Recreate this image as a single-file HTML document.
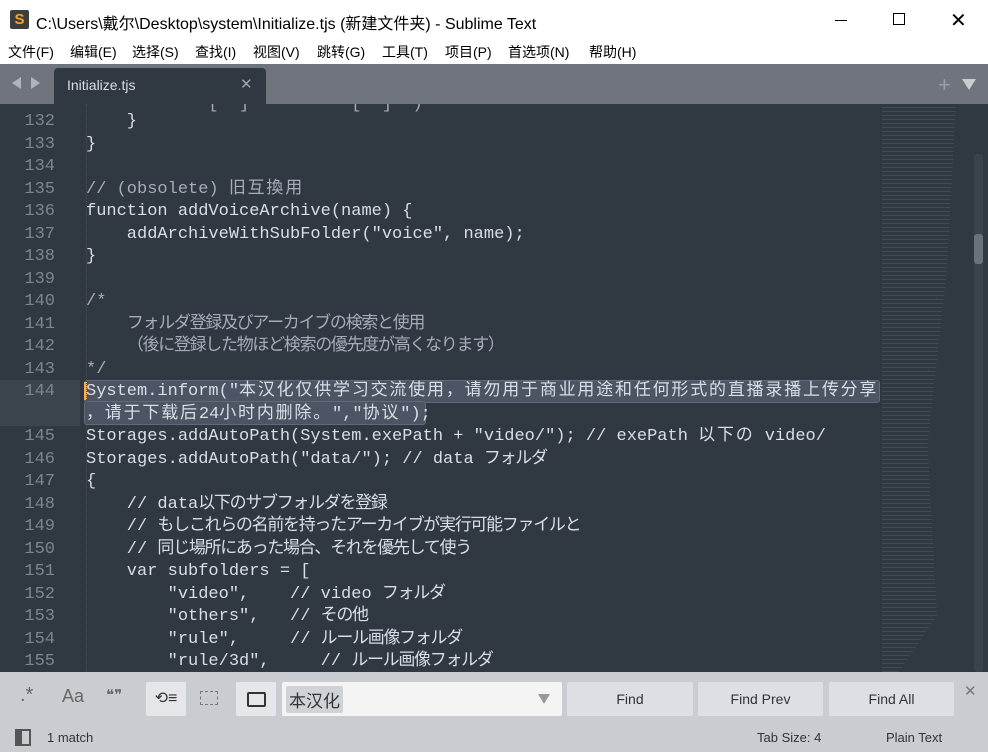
<!DOCTYPE html>
<html><head><meta charset="utf-8"><style>
*{margin:0;padding:0;box-sizing:border-box}
body{width:988px;height:752px;overflow:hidden;background:#fff;font-family:"Liberation Sans","Noto Sans CJK SC",sans-serif;position:relative}
.title{position:absolute;top:0;left:0;width:988px;height:38px;background:#fff;font-size:16px;color:#000}
.menu{position:absolute;top:38px;left:0;width:988px;height:26px;font-size:14px;color:#000}
.menu span{position:absolute;top:4px}
.tabbar{position:absolute;top:64px;left:0;width:988px;height:40px;background:#70757d}
.tab{position:absolute;left:54px;top:68px;width:212px;height:36px;background:#303841;border-radius:4px 4px 0 0;color:#d8dee9;font-size:14px}
.ed{position:absolute;top:104px;left:0;width:988px;height:568px;background:#303841;overflow:hidden}
.row{position:absolute;left:0;height:23px;width:880px;font-family:"Liberation Mono","Noto Sans CJK SC",monospace;font-size:17px;line-height:23px;color:#d8dee9;white-space:pre}
.num{position:absolute;left:0;width:55px;text-align:right;color:#7d8590}
.code{position:absolute;left:86px}
.c{color:#a6acb9}
.j{letter-spacing:1.8px}
.k{letter-spacing:-1.3px}
.find{position:absolute;top:672px;left:0;width:988px;height:50px;background:#c9ccd1}
.status{position:absolute;top:722px;left:0;width:988px;height:30px;background:#c9ccd1;font-size:13px;color:#333}
.btn{position:absolute;top:682px;height:34px;background:#dcdfe3;border-radius:2px;font-size:14px;color:#333;text-align:center;line-height:34px}
</style></head><body>
<div class="title">
 <div style="position:absolute;left:10px;top:10px;width:19px;height:19px;background:#3d3d3d;border-radius:2px;color:#f5a623;font-weight:bold;font-size:15px;text-align:center;line-height:19px">S</div>
 <div style="position:absolute;left:36px;top:10px">C:\Users\戴尔\Desktop\system\Initialize.tjs (新建文件夹) - Sublime Text</div>
 <div style="position:absolute;left:835px;top:20px;width:12px;height:1px;background:#000"></div>
 <div style="position:absolute;left:893px;top:13px;width:12px;height:12px;border:1px solid #000"></div>
 <div style="position:absolute;left:950px;top:8px;font-size:20px">✕</div>
</div>
<div class="menu">
<span style="left:8px">文件(F)</span><span style="left:70px">编辑(E)</span><span style="left:132px">选择(S)</span><span style="left:195px">查找(I)</span><span style="left:253px">视图(V)</span><span style="left:317px">跳转(G)</span><span style="left:382px">工具(T)</span><span style="left:445px">项目(P)</span><span style="left:508px">首选项(N)</span><span style="left:589px">帮助(H)</span>
</div>
<div class="tabbar">
 <div style="position:absolute;left:12px;top:13px;width:0;height:0;border-top:6px solid transparent;border-bottom:6px solid transparent;border-right:9px solid #b0b4ba"></div>
 <div style="position:absolute;left:31px;top:13px;width:0;height:0;border-top:6px solid transparent;border-bottom:6px solid transparent;border-left:9px solid #b0b4ba"></div>
 <div style="position:absolute;left:938px;top:8px;color:#9a9ea4;font-size:22px">+</div>
 <div style="position:absolute;left:962px;top:15px;width:0;height:0;border-left:7px solid transparent;border-right:7px solid transparent;border-top:11px solid #c8cbd0"></div>
</div>
<div class="tab"><span style="position:absolute;left:13px;top:9px">Initialize.tjs</span><span style="position:absolute;left:186px;top:7px;color:#a0a4aa;font-size:15px">✕</span></div>
<div class="ed">
 <div style="position:absolute;left:0;top:276px;width:80px;height:46px;background:#3c444e"></div>
 <div style="position:absolute;left:84px;top:276px;width:796px;height:23px;background:#4b5563;border:1px solid #5f6b78;border-radius:3px"></div>
 <div style="position:absolute;left:84px;top:297px;width:342px;height:24px;background:#4b5563;border:1px solid #5f6b78;border-radius:3px"></div>
 <div style="position:absolute;left:84px;top:278px;width:3px;height:18px;background:#f9ae58"></div>
 <div style="position:absolute;left:86px;top:0;width:1px;height:568px;border-left:1px dotted #444c56"></div>
 <div class="row" style="top:-11px"><span class="code" style="color:#aaa">            [  ]          [  ]  )</span></div>
 <div class="row" style="top:6px"><span class="num">132</span><span class="code">    }</span></div>
 <div class="row" style="top:29px"><span class="num">133</span><span class="code">}</span></div>
 <div class="row" style="top:51px"><span class="num">134</span></div>
 <div class="row" style="top:74px"><span class="num">135</span><span class="code c">// (obsolete) <span class="j">旧互換用</span></span></div>
 <div class="row" style="top:96px"><span class="num">136</span><span class="code">function addVoiceArchive(name) {</span></div>
 <div class="row" style="top:119px"><span class="num">137</span><span class="code">    addArchiveWithSubFolder("voice", name);</span></div>
 <div class="row" style="top:141px"><span class="num">138</span><span class="code">}</span></div>
 <div class="row" style="top:164px"><span class="num">139</span></div>
 <div class="row" style="top:186px"><span class="num">140</span><span class="code c">/*</span></div>
 <div class="row" style="top:209px"><span class="num">141</span><span class="code c">    <span class="k">フォルダ登録及びアーカイブの検索と使用</span></span></div>
 <div class="row" style="top:231px"><span class="num">142</span><span class="code c">    <span class="k">（後に登録した物ほど検索の優先度が高くなります）</span></span></div>
 <div class="row" style="top:254px"><span class="num">143</span><span class="code c">*/</span></div>
 <div class="row" style="top:276px"><span class="num">144</span><span class="code">System.inform("<span class="j">本汉化仅供学习交流使用，请勿用于商业用途和任何形式的直播录播上传分享</span></span></div>
 <div class="row" style="top:299px"><span class="code"><span class="j">，请于下载后</span>24<span class="j">小时内删除。</span>","<span class="j">协议</span>");</span></div>
 <div class="row" style="top:321px"><span class="num">145</span><span class="code">Storages.addAutoPath(System.exePath + "video/"); // exePath <span class="j">以下の</span> video/</span></div>
 <div class="row" style="top:344px"><span class="num">146</span><span class="code">Storages.addAutoPath("data/"); // data <span class="k">フォルダ</span></span></div>
 <div class="row" style="top:366px"><span class="num">147</span><span class="code">{</span></div>
 <div class="row" style="top:389px"><span class="num">148</span><span class="code">    // data<span class="k">以下のサブフォルダを登録</span></span></div>
 <div class="row" style="top:411px"><span class="num">149</span><span class="code">    // <span class="k">もしこれらの名前を持ったアーカイブが実行可能ファイルと</span></span></div>
 <div class="row" style="top:434px"><span class="num">150</span><span class="code">    // <span class="k">同じ場所にあった場合、それを優先して使う</span></span></div>
 <div class="row" style="top:456px"><span class="num">151</span><span class="code">    var subfolders = [</span></div>
 <div class="row" style="top:479px"><span class="num">152</span><span class="code">        "video",    // video <span class="k">フォルダ</span></span></div>
 <div class="row" style="top:501px"><span class="num">153</span><span class="code">        "others",   // <span class="k">その他</span></span></div>
 <div class="row" style="top:524px"><span class="num">154</span><span class="code">        "rule",     // <span class="k">ルール画像フォルダ</span></span></div>
 <div class="row" style="top:546px"><span class="num">155</span><span class="code">        "rule/3d",     // <span class="k">ルール画像フォルダ</span></span></div>
 <div style="position:absolute;left:880px;top:0;width:95px;height:568px;background:repeating-linear-gradient(#303841 0 3px,#4a525c 3px 4px);opacity:.7;clip-path:polygon(2% 0,80% 0,70% 30%,50% 60%,60% 90%,20% 100%,2% 100%)"></div>
 <div style="position:absolute;left:974px;top:50px;width:9px;height:518px;background:#3a424c;border-radius:3px"></div>
 <div style="position:absolute;left:974px;top:130px;width:9px;height:30px;background:#6a727c;border-radius:3px"></div>
</div>
<div class="find">
 <span style="position:absolute;left:20px;top:12px;font-size:20px;color:#666">.*</span>
 <span style="position:absolute;left:62px;top:14px;font-size:18px;color:#666">Aa</span>
 <span style="position:absolute;left:106px;top:14px;font-size:15px;color:#666">❝❞</span>
 <div style="position:absolute;left:146px;top:10px;width:40px;height:34px;background:#e4e6e9;border-radius:2px;text-align:center;line-height:34px;color:#333;font-size:16px">⟲≡</div>
 <div style="position:absolute;left:200px;top:19px;width:18px;height:14px;border:1px dashed #777"></div>
 <div style="position:absolute;left:236px;top:10px;width:40px;height:34px;background:#e4e6e9;border-radius:2px"><div style="position:absolute;left:11px;top:10px;width:19px;height:15px;border:2px solid #333;border-radius:2px"></div></div>
 <div style="position:absolute;left:282px;top:10px;width:280px;height:34px;background:#f4f4f5;border-radius:2px"><span style="position:absolute;left:4px;top:4px;background:#cfd2d6;padding:1px 3px;font-size:17px;color:#333;border-radius:2px">本汉化</span><div style="position:absolute;left:256px;top:12px;border-left:6px solid transparent;border-right:6px solid transparent;border-top:10px solid #999"></div></div>
 <span style="position:absolute;left:964px;top:10px;font-size:15px;color:#777">✕</span>
</div>
<div class="btn" style="left:567px;width:126px">Find</div>
<div class="btn" style="left:698px;width:125px">Find Prev</div>
<div class="btn" style="left:829px;width:125px">Find All</div>
<div class="status">
 <div style="position:absolute;left:15px;top:7px;width:16px;height:17px;border:2px solid #555"><div style="width:5px;height:13px;background:#555"></div></div>
 <span style="position:absolute;left:47px;top:8px">1 match</span>
 <span style="position:absolute;left:757px;top:8px">Tab Size: 4</span>
 <span style="position:absolute;left:886px;top:8px">Plain Text</span>
</div>
</body></html>
